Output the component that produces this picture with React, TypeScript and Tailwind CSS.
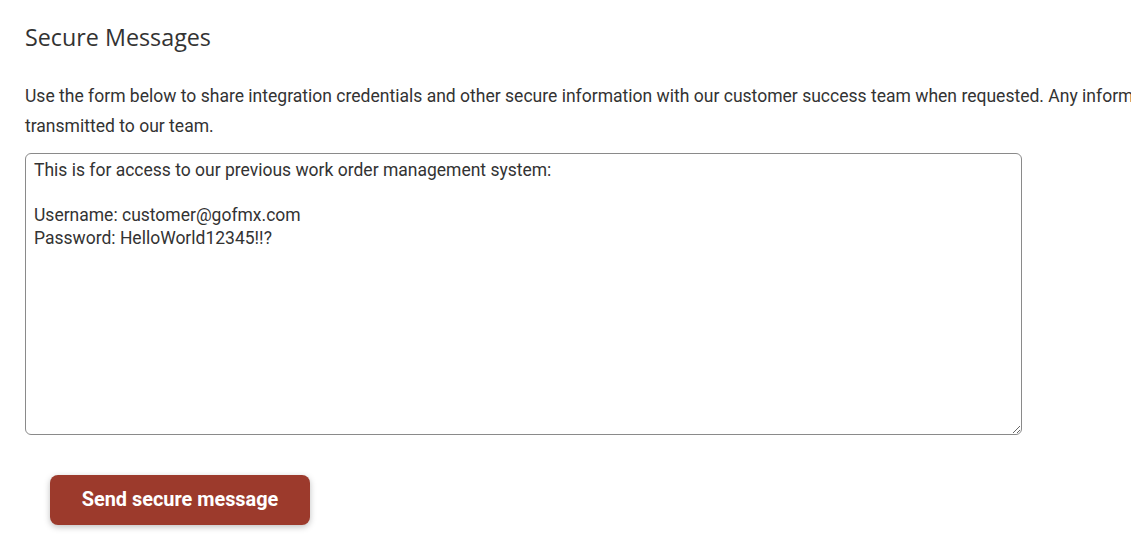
import React from "react";

export default function App() {
  const [text, setText] = React.useState(
    "This is for access to our previous work order management system:\n\nUsername: customer@gofmx.com\nPassword: HelloWorld12345!!?"
  );
  return (
    <div className="w-[1131px] h-[542px] overflow-hidden bg-white" style={{ fontFamily: "Roboto, 'Liberation Sans', sans-serif" }}>
      <div className="pl-[25px] pt-[22px]">
        <h1 className="text-[23.3px] leading-[30px] text-[#333333] font-normal" style={{ fontFamily: "'Open Sans', 'Noto Sans', sans-serif" }}>
          Secure Messages
        </h1>
        <p className="mt-[29px] text-[17.55px] leading-[30px] text-[#333333] whitespace-nowrap">
          Use the form below to share integration credentials and other secure information with our customer success team when requested. Any information submitted here is encrypted and securely
          <br />
          transmitted to our team.
        </p>
        <textarea
          value={text}
          onChange={(e) => setText(e.target.value)}
          className="mt-[12px] block w-[997px] h-[282px] border border-[#8a8a8a] rounded-[6px] px-[8px] py-[5px] text-[17.5px] leading-[22.5px] text-[#333333] outline-none resize"
          style={{ fontFamily: "Roboto, 'Liberation Sans', sans-serif" }}
        />
        <button className="mt-[40px] ml-[25px] w-[260px] h-[50px] rounded-[8px] bg-[#9c3a2c] text-white text-[19.9px] font-bold shadow-[0_2px_6px_rgba(0,0,0,0.25)]">
          Send secure message
        </button>
      </div>
    </div>
  );
}
